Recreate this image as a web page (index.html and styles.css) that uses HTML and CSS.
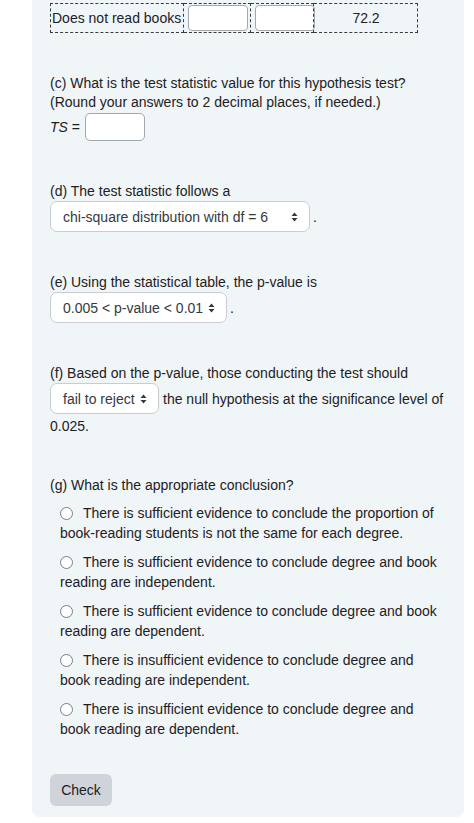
FILE: index.html
```html
<!DOCTYPE html>
<html lang="en">
<head>
<meta charset="utf-8">
<title>Question</title>
<link rel="stylesheet" href="styles.css">
</head>
<body>
<div class="panel">
  <table class="data">
    <colgroup><col class="c1"><col class="c2"><col class="c3"><col class="c4"></colgroup>
    <tr>
      <td class="lbl">Does not read books</td>
      <td><span class="cellbox"></span></td>
      <td><span class="cellbox"></span></td>
      <td class="num">72.2</td>
    </tr>
  </table>

  <div class="part part-c">
    <p class="line">(c) What is the test statistic value for this hypothesis test?</p>
    <p class="line">(Round your answers to 2 decimal places, if needed.)</p>
    <div class="ts-row"><span class="ts-label"><i>TS</i> =</span><span class="tsbox"></span></div>
  </div>

  <div class="part part-d">
    <p class="line">(d) The test statistic follows a</p>
    <div class="select-row">
      <span class="select sel-d"><span class="sel-text">chi-square distribution with df = 6</span><svg class="sel-arrow" width="7" height="10" viewBox="0 0 7 10"><path d="M3.5 0.5 L6.5 4 H0.5 Z M0.5 6 H6.5 L3.5 9.5 Z" fill="#343a40"/></svg></span><span class="dot">.</span>
    </div>
  </div>

  <div class="part part-e">
    <p class="line">(e) Using the statistical table, the p-value is</p>
    <div class="select-row">
      <span class="select sel-e"><span class="sel-text">0.005 &lt; p-value &lt; 0.01</span><svg class="sel-arrow" width="7" height="10" viewBox="0 0 7 10"><path d="M3.5 0.5 L6.5 4 H0.5 Z M0.5 6 H6.5 L3.5 9.5 Z" fill="#343a40"/></svg></span><span class="dot">.</span>
    </div>
  </div>

  <div class="part part-f">
    <p class="line">(f) Based on the p-value, those conducting the test should</p>
    <div class="select-row">
      <span class="select sel-f"><span class="sel-text">fail to reject</span><svg class="sel-arrow" width="7" height="10" viewBox="0 0 7 10"><path d="M3.5 0.5 L6.5 4 H0.5 Z M0.5 6 H6.5 L3.5 9.5 Z" fill="#343a40"/></svg></span><span class="after">the null hypothesis at the significance level of</span>
    </div>
    <p class="line line-tail">0.025.</p>
  </div>

  <div class="part part-g">
    <p class="line">(g) What is the appropriate conclusion?</p>
    <div class="options">
      <label class="opt"><span class="radio"></span>There is sufficient evidence to conclude the proportion of book-reading students is not the same for each degree.</label>
      <label class="opt"><span class="radio"></span>There is sufficient evidence to conclude degree and book reading are independent.</label>
      <label class="opt"><span class="radio"></span>There is sufficient evidence to conclude degree and book reading are dependent.</label>
      <label class="opt"><span class="radio"></span>There is insufficient evidence to conclude degree and book reading are independent.</label>
      <label class="opt"><span class="radio"></span>There is insufficient evidence to conclude degree and book reading are dependent.</label>
    </div>
  </div>

  <button class="check" type="button">Check</button>
</div>
</body>
</html>
```

FILE: styles.css
```css
html, body {
  margin: 0;
  padding: 0;
  background: #ffffff;
}

body {
  font-family: "Liberation Sans", Arial, sans-serif;
  font-size: 14px;
  color: #1d2125;
  width: 474px;
}

.panel {
  margin-left: 32px;
  width: 432px;
  box-sizing: border-box;
  padding: 3px 18px 11px 18px;
  background: #f0f5f7;
  border-radius: 0 0 8px 8px;
}

/* table */
.data {
  border-collapse: collapse;
  table-layout: fixed;
  width: 367px;
}
.c1 { width: 133px; }
.c2 { width: 67px; }
.c3 { width: 63px; }
.c4 { width: 104px; }

.data td {
  border: 1px dashed #3a3a3a;
  height: 28px;
  padding: 0 1px 0 2px;
  vertical-align: middle;
  white-space: nowrap;
}
.data td.lbl { padding-left: 1px; }
.data td.num { text-align: center; }

.cellbox {
  display: block;
  width: 60px;
  height: 26px;
  box-sizing: border-box;
  margin-left: 2px;
  background: #ffffff;
  border: 1px solid #a3a8ad;
  border-radius: 4px;
}

/* parts */
.part { margin: 0; }
.line {
  margin: 0;
  line-height: 20px;
}

.part-c { margin-top: 41px; }
.part-c .line { line-height: 19px; }

.ts-row {
  display: flex;
  align-items: center;
  height: 28px;
  margin-top: 1px;
}
.ts-label { margin-right: 5px; }
.tsbox {
  display: block;
  width: 60px;
  height: 28px;
  box-sizing: border-box;
  background: #ffffff;
  border: 1px solid #a3a8ad;
  border-radius: 5px;
}

.part-d { margin-top: 40px; }
.part-e { margin-top: 40px; }
.part-f { margin-top: 40px; }
.part-g { margin-top: 39px; }

.select-row {
  display: flex;
  align-items: center;
}

.select {
  display: inline-flex;
  align-items: center;
  justify-content: space-between;
  height: 31px;
  box-sizing: border-box;
  padding: 0 11px 0 12px;
  background: #ffffff;
  border: 1px solid #c9cdd2;
  border-radius: 7px;
  color: #343a40;
}
.sel-d { width: 260px; }
.sel-e { width: 177px; }
.sel-f { width: 109px; }

.sel-arrow {
  display: block;
  flex: none;
}

.dot { margin-left: 3px; }
.after { margin-left: 4px; }

.line-tail { margin-top: 2px; }

/* options */
.options {
  margin-top: 8px;
  padding-left: 10px;
  padding-right: 0;
}
.opt {
  display: block;
  line-height: 20px;
  margin-bottom: 9px;
}
.opt:last-child { margin-bottom: 0; }

.radio {
  display: inline-block;
  width: 13px;
  height: 13px;
  box-sizing: border-box;
  border: 1.5px solid #7a7f85;
  border-radius: 50%;
  background: #ffffff;
  margin-right: 10px;
  vertical-align: -2px;
}

.check {
  display: block;
  margin-top: 35px;
  width: 62px;
  height: 32px;
  padding: 0;
  border: none;
  border-radius: 6px;
  background: #ced4da;
  color: #1d2125;
  font-family: "Liberation Sans", Arial, sans-serif;
  font-size: 14px;
}
```
